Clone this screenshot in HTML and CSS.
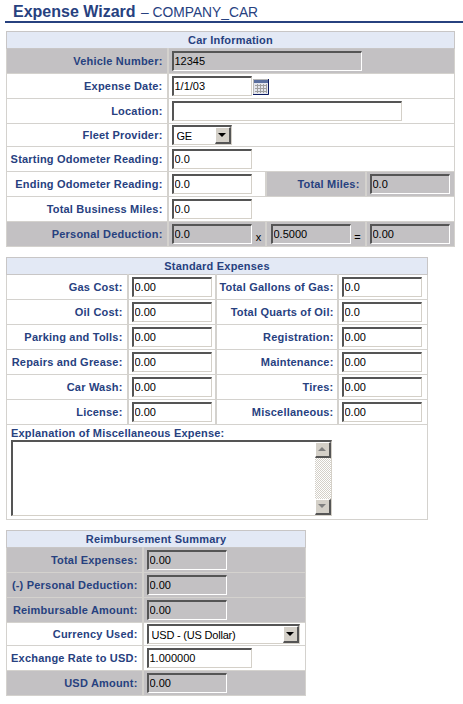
FILE: index.html
```html
<!DOCTYPE html>
<html lang="en">
<head>
    <meta charset="UTF-8">
    <title>Expense Wizard</title>
    <link rel="stylesheet" href="styles.css">
</head>
<body>
    <h1 class="page-title">Expense Wizard <span class="subtitle">&ndash; COMPANY_CAR</span></h1>

    <!-- Car Information -->
    <table class="form-table car-table">
        <colgroup><col class="c1"><col class="c2"><col class="c3"><col class="c4"></colgroup>
        <tr class="head"><th colspan="4">Car Information</th></tr>
        <tr class="gray">
            <td class="label">Vehicle Number:</td>
            <td colspan="3"><input class="field ro w190" value="12345" readonly></td>
        </tr>
        <tr>
            <td class="label">Expense Date:</td>
            <td colspan="3" class="date-cell">
                <input class="field w80" value="1/1/03">
                <svg class="cal" width="16" height="16" viewBox="0 0 16 16">
                    <rect x="0.5" y="0.5" width="15" height="15" fill="#e4e6ee" stroke="#b8b8b8"/>
                    <rect x="1" y="1" width="14" height="3" fill="#5a6f9f"/>
                    <path d="M2 6.500h12M2 9.500h12M2 12.500h12M4.500 5v9M7.500 5v9M10.500 5v9M13.500 5v9" stroke="#a0a0a0" stroke-width="1" fill="none"/>
                    <path d="M15.500 0v15.500H0" stroke="#0a1a60" stroke-width="1" fill="none"/>
                </svg>
            </td>
        </tr>
        <tr>
            <td class="label">Location:</td>
            <td colspan="3"><input class="field w230"></td>
        </tr>
        <tr class="short">
            <td class="label">Fleet Provider:</td>
            <td colspan="3">
                <div class="select w60">
                    <select><option>GE</option></select>
                    <span class="arrow"></span>
                </div>
            </td>
        </tr>
        <tr>
            <td class="label">Starting Odometer Reading:</td>
            <td colspan="3"><input class="field w80" value="0.0"></td>
        </tr>
        <tr>
            <td class="label">Ending Odometer Reading:</td>
            <td><input class="field w80" value="0.0"></td>
            <td class="label gray-cell">Total Miles:</td>
            <td class="gray-cell"><input class="field ro w80" value="0.0" readonly></td>
        </tr>
        <tr>
            <td class="label">Total Business Miles:</td>
            <td colspan="3"><input class="field w80" value="0.0"></td>
        </tr>
        <tr class="gray">
            <td class="label">Personal Deduction:</td>
            <td><input class="field ro w80" value="0.0" readonly><span class="op">x</span></td>
            <td class="factor"><input class="field ro w80" value="0.5000" readonly><span class="op">=</span></td>
            <td><input class="field ro w80" value="0.00" readonly></td>
        </tr>
    </table>

    <!-- Standard Expenses -->
    <table class="form-table expense-table">
        <colgroup><col class="c1"><col class="c2"><col class="c3"><col class="c4"></colgroup>
        <tr class="head"><th colspan="4">Standard Expenses</th></tr>
        <tr>
            <td class="label">Gas Cost:</td><td><input class="field w80" value="0.00"></td>
            <td class="label">Total Gallons of Gas:</td><td><input class="field w80" value="0.0"></td>
        </tr>
        <tr>
            <td class="label">Oil Cost:</td><td><input class="field w80" value="0.00"></td>
            <td class="label">Total Quarts of Oil:</td><td><input class="field w80" value="0.0"></td>
        </tr>
        <tr>
            <td class="label">Parking and Tolls:</td><td><input class="field w80" value="0.00"></td>
            <td class="label">Registration:</td><td><input class="field w80" value="0.00"></td>
        </tr>
        <tr>
            <td class="label">Repairs and Grease:</td><td><input class="field w80" value="0.00"></td>
            <td class="label">Maintenance:</td><td><input class="field w80" value="0.00"></td>
        </tr>
        <tr>
            <td class="label">Car Wash:</td><td><input class="field w80" value="0.00"></td>
            <td class="label">Tires:</td><td><input class="field w80" value="0.00"></td>
        </tr>
        <tr>
            <td class="label">License:</td><td><input class="field w80" value="0.00"></td>
            <td class="label">Miscellaneous:</td><td><input class="field w80" value="0.00"></td>
        </tr>
        <tr>
            <td colspan="4" class="explain">
                <div class="explain-label">Explanation of Miscellaneous Expense:</div>
                <div class="textbox">
                    <textarea></textarea>
                    <div class="scrollbar">
                        <span class="sb-btn"><i class="tri up"></i></span>
                        <span class="sb-track"></span>
                        <span class="sb-btn"><i class="tri down"></i></span>
                    </div>
                </div>
            </td>
        </tr>
    </table>

    <!-- Reimbursement Summary -->
    <table class="form-table summary-table">
        <colgroup><col class="c1"><col class="c2"></colgroup>
        <tr class="head"><th colspan="2">Reimbursement Summary</th></tr>
        <tr class="gray">
            <td class="label">Total Expenses:</td><td><input class="field ro w80" value="0.00" readonly></td>
        </tr>
        <tr class="gray">
            <td class="label">(-) Personal Deduction:</td><td><input class="field ro w80" value="0.00" readonly></td>
        </tr>
        <tr class="gray">
            <td class="label">Reimbursable Amount:</td><td><input class="field ro w80" value="0.00" readonly></td>
        </tr>
        <tr class="short">
            <td class="label">Currency Used:</td>
            <td>
                <div class="select w153">
                    <select><option>USD - (US Dollar)</option></select>
                    <span class="arrow"></span>
                </div>
            </td>
        </tr>
        <tr>
            <td class="label">Exchange Rate to USD:</td><td><input class="field w105" value="1.000000"></td>
        </tr>
        <tr class="gray">
            <td class="label">USD Amount:</td><td><input class="field ro w80" value="0.00" readonly></td>
        </tr>
    </table>
</body>
</html>
```

FILE: styles.css
```css
body {
    margin: 0;
    background-color: #fff;
    font-family: "Liberation Sans", Arial, sans-serif;
    font-size: 11px;
    color: #000;
}

.page-title {
    margin: 0 0 8px 5px;
    padding: 3px 0 0 8px;
    height: 18px;
    line-height: 17px;
    border-bottom: 2px solid #27417f;
    font-size: 16px;
    font-weight: bold;
    color: #27417f;
}

.subtitle {
    margin-left: 1px;
    font-size: 13.8px;
    font-weight: normal;
}

.form-table {
    border-collapse: collapse;
    table-layout: fixed;
    margin: 0 0 10px 6px;
    border: 1px solid #c8c6c6;
}

.form-table td {
    height: 24px;
    padding: 0 0 0 3px;
    border: 1px solid #d4d2ce;
    vertical-align: middle;
    white-space: nowrap;
}

.form-table td + td {
    border-left-width: 2px;
}

.form-table tr.short td {
    height: 22px;
}

.form-table th {
    height: 16px;
    padding: 0;
    background-color: #e3e9f5;
    border: 1px solid #c8c6c6;
    font-size: 11px;
    color: #27417f;
    letter-spacing: 0.2px;
}

.car-table { width: 449px; }
.car-table .c1 { width: 161px; }
.car-table .c2 { width: 98px; }
.car-table .c3 { width: 100px; }

.expense-table { width: 422px; }
.expense-table .c1 { width: 121px; }
.expense-table .c2 { width: 88px; }
.expense-table .c3 { width: 122px; }

.summary-table { width: 300px; margin-bottom: 0; }
.summary-table .c1 { width: 136px; }

.form-table td.label {
    padding: 0 4px 0 0;
    text-align: right;
    font-weight: bold;
    color: #27417f;
    letter-spacing: 0.2px;
}

.expense-table td.label:nth-child(3) {
    padding-right: 3px;
}

.form-table td.label.gray-cell {
    padding-right: 5px;
}

.gray td, .form-table td.gray-cell {
    background-color: #c3c1c3;
}

.car-table td.factor {
    padding-left: 4px;
}

.field {
    box-sizing: border-box;
    height: 20px;
    margin: 0;
    padding: 0 0 2px 1px;
    vertical-align: middle;
    background-color: #fff;
    border-style: solid;
    border-width: 2px 1px 1px 2px;
    border-color: #555 #d4d0c8 #d4d0c8 #555;
    font-family: "Liberation Sans", Arial, sans-serif;
    font-size: 11px;
    color: #000;
}

.field.ro {
    background-color: #c3c1c3;
    border-color: #555 #fff #fff #555;
}

.w80 { width: 80px; }
.w105 { width: 105px; }
.w190 { width: 190px; }
.w230 { width: 230px; }
.w60 { width: 60px; }
.w153 { width: 153px; }

.op {
    display: inline-block;
    width: 14px;
    text-align: center;
    vertical-align: -4px;
    font-size: 11px;
}

.date-cell .cal {
    vertical-align: middle;
    margin: 2px 0 0 -2px;
}

/* select with the old style arrow button on top */
.select {
    position: relative;
    box-sizing: border-box;
    height: 20px;
    border-style: solid;
    border-width: 2px 1px 1px 2px;
    border-color: #555 #d4d0c8 #d4d0c8 #555;
    background-color: #fff;
}

.select select {
    appearance: none;
    display: block;
    width: 100%;
    height: 17px;
    margin: 0;
    padding: 0 0 0 3px;
    border: 0;
    background: transparent;
    font-family: "Liberation Sans", Arial, sans-serif;
    font-size: 11px;
    letter-spacing: -0.2px;
    color: #000;
}

.arrow {
    position: absolute;
    top: 0;
    right: 0;
    box-sizing: border-box;
    width: 16px;
    height: 17px;
    background-color: #d4d0c8;
    border-style: solid;
    border-width: 1px 2px 2px 1px;
    border-color: #fff #555 #555 #fff;
}

.arrow::after {
    content: "";
    position: absolute;
    left: 2px;
    top: 5px;
    border-style: solid;
    border-width: 4px 4px 0 4px;
    border-color: #000 transparent transparent transparent;
}

.form-table td.explain {
    height: 94px;
    padding: 0 0 0 4px;
    vertical-align: top;
}

.explain-label {
    height: 15px;
    line-height: 16px;
    font-weight: bold;
    color: #27417f;
    letter-spacing: 0.2px;
}

.textbox {
    box-sizing: border-box;
    display: flex;
    width: 321px;
    height: 76px;
    border-style: solid;
    border-width: 2px 1px 1px 2px;
    border-color: #555 #d4d0c8 #d4d0c8 #555;
}

.textbox textarea {
    flex: 1;
    margin: 0;
    padding: 0;
    border: 0;
    resize: none;
    overflow: hidden;
}

.scrollbar {
    display: flex;
    flex-direction: column;
    width: 16px;
}

.sb-btn {
    position: relative;
    box-sizing: border-box;
    height: 16px;
    background-color: #d4d0c8;
    border-style: solid;
    border-width: 1px 2px 2px 1px;
    border-color: #fff #555 #555 #fff;
}

.sb-track {
    flex: 1;
    background: repeating-conic-gradient(#d4d0c8 0 25%, #fff 0 50%) 0 0 / 2px 2px;
}

.tri {
    position: absolute;
    left: 2px;
    top: 4px;
    border-style: solid;
    border-color: transparent;
}

.tri.up {
    border-width: 0 4px 4px 4px;
    border-bottom-color: #808080;
}

.tri.down {
    border-width: 4px 4px 0 4px;
    border-top-color: #808080;
}
```
